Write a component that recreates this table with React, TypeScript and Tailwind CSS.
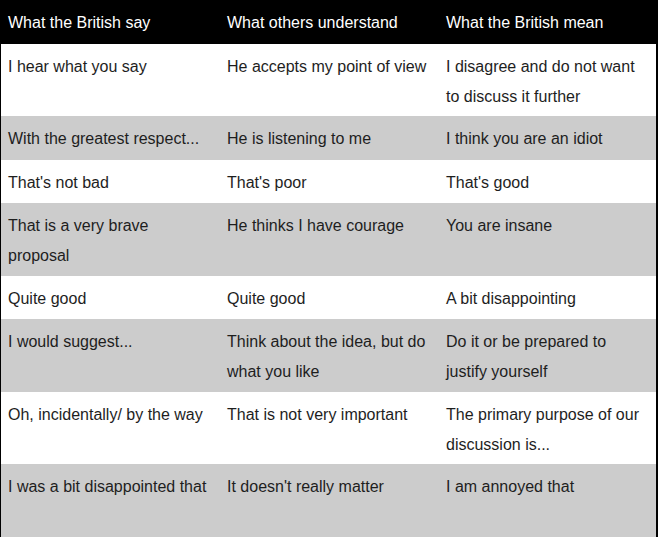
import React from "react";

const rows: { cells: [string, string, string]; h: string; gray: boolean }[] = [
  { cells: ["I hear what you say", "He accepts my point of view", "I disagree and do not want to discuss it further"], h: "h-[72px]", gray: false },
  { cells: ["With the greatest respect...", "He is listening to me", "I think you are an idiot"], h: "h-[44px]", gray: true },
  { cells: ["That's not bad", "That's poor", "That's good"], h: "h-[43px]", gray: false },
  { cells: ["That is a very brave proposal", "He thinks I have courage", "You are insane"], h: "h-[73px]", gray: true },
  { cells: ["Quite good", "Quite good", "A bit disappointing"], h: "h-[43px]", gray: false },
  { cells: ["I would suggest...", "Think about the idea, but do what you like", "Do it or be prepared to justify yourself"], h: "h-[73px]", gray: true },
  { cells: ["Oh, incidentally/ by the way", "That is not very important", "The primary purpose of our discussion is..."], h: "h-[72px]", gray: false },
  { cells: ["I was a bit disappointed that", "It doesn't really matter", "I am annoyed that"], h: "h-[73px]", gray: true },
];

export default function App() {
  return (
    <div className="w-[661px] h-[546px] bg-white" style={{ fontFamily: '"Liberation Sans", Arial, sans-serif' }}>
      <div className="w-[658px] border-l border-r-2 border-black">
        <div className="grid grid-cols-[219px_219px_1fr] h-[44px] bg-black text-white text-[16px] leading-[30px]">
          <div className="pl-[7px] pt-[8px]">What the British say</div>
          <div className="pl-[7px] pt-[8px]">What others understand</div>
          <div className="pl-[7px] pt-[8px]">What the British mean</div>
        </div>
        {rows.map((r, i) => (
          <div
            key={i}
            className={`grid grid-cols-[219px_219px_1fr] text-[16px] leading-[30px] text-[#1e1e1e] ${r.h} ${r.gray ? "bg-[#cccccc]" : "bg-white"}`}
          >
            {r.cells.map((c, j) => (
              <div key={j} className="pl-[7px] pr-[10px] pt-[8px]">
                {c}
              </div>
            ))}
          </div>
        ))}
      </div>
    </div>
  );
}
